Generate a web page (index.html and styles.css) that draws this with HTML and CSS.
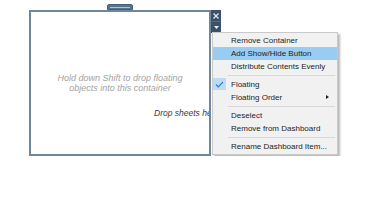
FILE: index.html
```html
<!DOCTYPE html>
<html>
<head>
<meta charset="utf-8">
<link rel="stylesheet" href="styles.css">
</head>
<body>
<div class="stage">
  <div class="container">
    <div class="handle"><span class="handle-line"></span></div>
    <div class="controls">
      <div class="ctrl ctrl-close">
        <svg width="6" height="6" viewBox="0 0 6 6"><path d="M0.5 0.5 L5.5 5.5 M5.5 0.5 L0.5 5.5" stroke="#dfe6ee" stroke-width="1.3" fill="none"/></svg>
      </div>
      <div class="ctrl ctrl-menu">
        <svg width="5" height="3" viewBox="0 0 5 3"><path d="M0 0 L5 0 L2.5 3 Z" fill="#eef2f6"/></svg>
      </div>
    </div>
    <div class="hint">Hold down Shift to drop floating<br>objects into this container</div>
    <div class="drop">Drop sheets here</div>

    <div class="menu">
      <div class="item">Remove Container</div>
      <div class="item active">Add Show/Hide Button</div>
      <div class="item">Distribute Contents Evenly</div>
      <div class="sep"></div>
      <div class="item checked">
        <span class="check"><svg width="9" height="7" viewBox="0 0 9 7"><path d="M1 3.5 L3.3 5.8 L8 1" stroke="#2f7fd6" stroke-width="1.2" fill="none"/></svg></span>
        Floating
      </div>
      <div class="item sub">Floating Order<span class="arrow"></span></div>
      <div class="sep"></div>
      <div class="item">Deselect</div>
      <div class="item">Remove from Dashboard</div>
      <div class="sep"></div>
      <div class="item">Rename Dashboard Item...</div>
    </div>
  </div>
</div>
</body>
</html>
```
FILE: styles.css
```css
html, body {
  margin: 0;
  padding: 0;
  background: #ffffff;
}

.stage {
  padding: 10px 0 0 29px;
}

.container {
  position: relative;
  box-sizing: border-box;
  width: 182px;
  height: 146px;
  border: 2px solid #6f879c;
  background: #ffffff;
}

.handle {
  position: absolute;
  left: 76px;
  top: -8px;
  box-sizing: border-box;
  width: 26px;
  height: 6px;
  background: #587390;
  border: 1px solid #44607d;
  border-radius: 2px 2px 0 0;
  display: flex;
  align-items: center;
  justify-content: center;
}

.handle-line {
  display: block;
  width: 20px;
  height: 1px;
  background: #b5c3d2;
}

.controls {
  position: absolute;
  left: calc(100% + 2px);
  top: -2px;
  width: 10px;
  height: 23px;
  background: #3c5169;
  display: flex;
  flex-direction: column;
}

.ctrl {
  display: flex;
  align-items: center;
  justify-content: center;
  flex: 1;
}

.ctrl-close {
  border-bottom: 1px solid #566b82;
}

.hint {
  margin-top: 61px;
  font-family: "Liberation Sans", Arial, sans-serif;
  font-style: italic;
  font-size: 9px;
  line-height: 10px;
  color: #a3a3a3;
  text-align: center;
}

.drop {
  margin-top: 15px;
  padding-left: 123px;
  font-family: "Liberation Sans", Arial, sans-serif;
  font-style: italic;
  font-size: 8.5px;
  line-height: 10px;
  color: #3a3a3a;
  white-space: nowrap;
  overflow: hidden;
}

.menu {
  position: absolute;
  left: 181px;
  top: 20px;
  box-sizing: border-box;
  width: 126px;
  padding: 1px 0;
  background: #f1f1f1;
  border: 1px solid #c9c9c9;
  box-shadow: 2px 2px 2px rgba(0, 0, 0, 0.28);
  font-family: "Liberation Sans", Arial, sans-serif;
  font-size: 8px;
  color: #1e1e1e;
}

.item {
  position: relative;
  height: 13px;
  line-height: 13px;
  padding-left: 18px;
  white-space: nowrap;
}

.item.active {
  background: #99ccf3;
}

.check {
  position: absolute;
  left: 0;
  top: 0;
  width: 13px;
  height: 12px;
  background: #bcdcf6;
  display: flex;
  align-items: center;
  justify-content: center;
}

.arrow {
  position: absolute;
  right: 8px;
  top: 4px;
  width: 0;
  height: 0;
  border-top: 2.5px solid transparent;
  border-bottom: 2.5px solid transparent;
  border-left: 3px solid #222;
}

.sep {
  height: 5px;
  display: flex;
  align-items: center;
  padding-left: 15px;
  padding-right: 2px;
}

.sep::before {
  content: "";
  display: block;
  flex: 1;
  height: 1px;
  background: #d8d8d8;
}
```
